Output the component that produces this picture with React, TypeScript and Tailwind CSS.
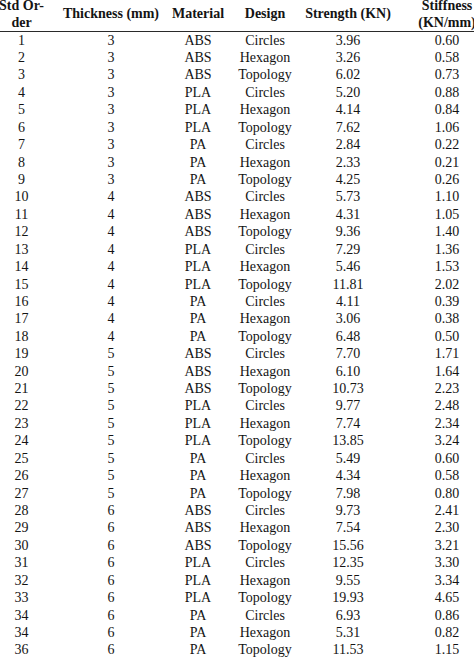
const rows: [string, string, string, string, string, string][] = [
  ['1', '3', 'ABS', 'Circles', '3.96', '0.60'],
  ['2', '3', 'ABS', 'Hexagon', '3.26', '0.58'],
  ['3', '3', 'ABS', 'Topology', '6.02', '0.73'],
  ['4', '3', 'PLA', 'Circles', '5.20', '0.88'],
  ['5', '3', 'PLA', 'Hexagon', '4.14', '0.84'],
  ['6', '3', 'PLA', 'Topology', '7.62', '1.06'],
  ['7', '3', 'PA', 'Circles', '2.84', '0.22'],
  ['8', '3', 'PA', 'Hexagon', '2.33', '0.21'],
  ['9', '3', 'PA', 'Topology', '4.25', '0.26'],
  ['10', '4', 'ABS', 'Circles', '5.73', '1.10'],
  ['11', '4', 'ABS', 'Hexagon', '4.31', '1.05'],
  ['12', '4', 'ABS', 'Topology', '9.36', '1.40'],
  ['13', '4', 'PLA', 'Circles', '7.29', '1.36'],
  ['14', '4', 'PLA', 'Hexagon', '5.46', '1.53'],
  ['15', '4', 'PLA', 'Topology', '11.81', '2.02'],
  ['16', '4', 'PA', 'Circles', '4.11', '0.39'],
  ['17', '4', 'PA', 'Hexagon', '3.06', '0.38'],
  ['18', '4', 'PA', 'Topology', '6.48', '0.50'],
  ['19', '5', 'ABS', 'Circles', '7.70', '1.71'],
  ['20', '5', 'ABS', 'Hexagon', '6.10', '1.64'],
  ['21', '5', 'ABS', 'Topology', '10.73', '2.23'],
  ['22', '5', 'PLA', 'Circles', '9.77', '2.48'],
  ['23', '5', 'PLA', 'Hexagon', '7.74', '2.34'],
  ['24', '5', 'PLA', 'Topology', '13.85', '3.24'],
  ['25', '5', 'PA', 'Circles', '5.49', '0.60'],
  ['26', '5', 'PA', 'Hexagon', '4.34', '0.58'],
  ['27', '5', 'PA', 'Topology', '7.98', '0.80'],
  ['28', '6', 'ABS', 'Circles', '9.73', '2.41'],
  ['29', '6', 'ABS', 'Hexagon', '7.54', '2.30'],
  ['30', '6', 'ABS', 'Topology', '15.56', '3.21'],
  ['31', '6', 'PLA', 'Circles', '12.35', '3.30'],
  ['32', '6', 'PLA', 'Hexagon', '9.55', '3.34'],
  ['33', '6', 'PLA', 'Topology', '19.93', '4.65'],
  ['34', '6', 'PA', 'Circles', '6.93', '0.86'],
  ['34', '6', 'PA', 'Hexagon', '5.31', '0.82'],
  ['36', '6', 'PA', 'Topology', '11.53', '1.15'],
];

// per-column padding so the centres land where the source table has them
const pad = ['pr-[23px]', 'pl-[2px]', 'pl-[10px]', 'pr-[8px]', 'pr-[8px]', ''];

const cols = 'grid grid-cols-[66px_88px_78px_74px_92px_98px]';

function HeadCell({ lines, i }: { lines: string[]; i: number }) {
  return (
    <div className={`flex flex-col items-center justify-center whitespace-nowrap ${pad[i]}`}>
      {lines.map((l) => (
        <span key={l}>{l}</span>
      ))}
    </div>
  );
}

export default function App() {
  const heads = [
    ['Std Or-', 'der'],
    ['Thickness (mm)'],
    ['Material'],
    ['Design'],
    ['Strength (KN)'],
    ['Stiffness', '(KN/mm)'],
  ];

  return (
    <div className="w-[474px] h-[661px] overflow-hidden bg-white text-[#141414] text-[14px] leading-[17.43px] font-['Liberation_Serif',serif]">
      <div className="w-[496px]">
        <div className={`${cols} h-[35px] mt-[-3.4px] border-b border-[#2a2a2a] font-bold`}>
          {heads.map((h, i) => (
            <HeadCell key={i} lines={h} i={i} />
          ))}
        </div>
        {rows.map((r, ri) => (
          <div key={ri} className={`${cols} h-[17.43px]`}>
            {r.map((c, i) => (
              <div key={i} className={`text-center whitespace-nowrap ${pad[i]}`}>
                {c}
              </div>
            ))}
          </div>
        ))}
      </div>
    </div>
  );
}
